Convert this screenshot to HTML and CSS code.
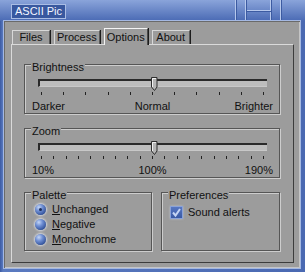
FILE: index.html
```html
<!DOCTYPE html>
<html lang="en">
<head>
    <meta charset="UTF-8">
    <title>ASCII Pic</title>
    <link rel="stylesheet" href="styles.css">
</head>
<body>
    <div class="window">
        <div class="titlebar">
            <span class="title">ASCII Pic</span>
            <svg class="deco" width="50" height="21" viewBox="0 0 50 21">
                <path d="M2.5 0V21M12.5 0V21M37.5 0V21M47.5 0V21M12 10.5H38" stroke="#b6c8ec" stroke-width="1" fill="none"/>
                <path d="M3.5 0V21M13.5 0V21M38.5 0V21M48.5 0V21M13 11.5H38" stroke="#3c5ba2" stroke-width="1" fill="none"/>
            </svg>
        </div>
        <div class="frame">
            <div class="client">
                <div class="tabs">
                    <span class="tab">Files</span>
                    <span class="tab">Process</span>
                    <span class="tab active">Options</span>
                    <span class="tab">About</span>
                </div>
                <div class="panel">
                    <div class="group slider-group">
                        <span class="legend">Brightness</span>
                        <div class="track"><svg class="thumb" width="7" height="14" viewBox="0 0 7 14"><polygon points="0.5,0.5 6,0.5 6,10 3.5,13.5 0.5,10" fill="#b4b4b4" stroke="#2e2e2e"/><path d="M1.5 10V1.5H5" stroke="#f2f2f2" fill="none"/></svg></div>
                        <div class="ticks">
                            <i></i><i></i><i></i><i></i><i></i><i></i><i></i><i></i><i></i><i></i><i></i>
                        </div>
                        <div class="scale"><span>Darker</span><span>Normal</span><span>Brighter</span></div>
                    </div>
                    <div class="group slider-group">
                        <span class="legend">Zoom</span>
                        <div class="track"><svg class="thumb" width="7" height="14" viewBox="0 0 7 14"><polygon points="0.5,0.5 6,0.5 6,10 3.5,13.5 0.5,10" fill="#b4b4b4" stroke="#2e2e2e"/><path d="M1.5 10V1.5H5" stroke="#f2f2f2" fill="none"/></svg></div>
                        <div class="ticks">
                            <i></i><i></i><i></i><i></i><i></i><i></i><i></i><i></i><i></i><i></i>
                            <i></i><i></i><i></i><i></i><i></i><i></i><i></i><i></i><i></i>
                        </div>
                        <div class="scale"><span>10%</span><span>100%</span><span>190%</span></div>
                    </div>
                    <div class="row">
                        <div class="group palette">
                            <span class="legend">Palette</span>
                            <label class="option"><span class="radio checked"></span><span><u>U</u>nchanged</span></label>
                            <label class="option"><span class="radio"></span><span><u>N</u>egative</span></label>
                            <label class="option"><span class="radio"></span><span><u>M</u>onochrome</span></label>
                        </div>
                        <div class="group prefs">
                            <span class="legend">Preferences</span>
                            <label class="option">
                                <span class="check"><svg width="11" height="11" viewBox="0 0 11 11"><path d="M2 5.5L4.5 8.5L9 2" stroke="#c4d4f4" stroke-width="2" fill="none"/></svg></span>
                                <span>Sound alerts</span>
                            </label>
                        </div>
                    </div>
                </div>
            </div>
        </div>
    </div>
</body>
</html>
```

FILE: styles.css
```css
* {
    box-sizing: border-box;
}
body {
    margin: 0;
    font-family: "Liberation Sans", Arial, sans-serif;
    font-size: 11px;
    color: #111;
    background: #4a69b2;
}
.window {
    width: 305px;
    height: 272px;
    display: flex;
    flex-direction: column;
}
.titlebar {
    height: 21px;
    flex: none;
    display: flex;
    align-items: flex-start;
    background: linear-gradient(#8aa4da, #4a6ab4);
}
.title {
    margin: 4px 0 0 11px;
    height: 15px;
    padding: 0 3px;
    line-height: 13px;
    white-space: nowrap;
    color: #f2f6ff;
    background: #38589f;
    border: 1px solid #a9bde4;
}
.deco {
    margin-left: auto;
    margin-right: 22px;
}
.frame {
    flex: 1;
    display: flex;
    min-height: 0;
    padding: 0 5px 4px 4px;
    background: linear-gradient(to right, #3b5aa3, #5a7ac0 3px, #4a69b2);
}
.client {
    flex: 1;
    display: flex;
    flex-direction: column;
    padding: 7px 6px 5px 7px;
    background: #9c9c9c;
    box-shadow: 0 0 0 1px #a4b8e2, inset 1px 1px 0 #6a6a6a, inset -1px -1px 0 #c4c4c4;
}
.tabs {
    display: flex;
    align-items: flex-end;
    gap: 4px;
    height: 16px;
    flex: none;
    padding-left: 1px;
}
.tab {
    min-width: 38px;
    padding: 0 2px;
    height: 14px;
    line-height: 13px;
    text-align: center;
    border-top: 1px solid #d8d8d8;
    border-left: 1px solid #d8d8d8;
    border-right: 1px solid #5a5a5a;
    box-shadow: 1px 0 0 #1c1c1c;
}
.tab.active {
    position: relative;
    z-index: 1;
    height: 17px;
    padding-top: 1px;
    margin-bottom: -1px;
    line-height: 15px;
    background: #9c9c9c;
    border-color: #f4f4f4;
    border-right-color: #4a4a4a;
}
.panel {
    flex: 1;
    display: flex;
    flex-direction: column;
    gap: 14px;
    padding: 19px 13px 10px 12px;
    border: 1px solid;
    border-color: #dadada #3c3c3c #3c3c3c #dadada;
}
.group {
    position: relative;
    border: 1px solid #565656;
    box-shadow: 1px 1px 0 #cdcdcd, inset 1px 1px 0 #cdcdcd;
}
.legend {
    position: absolute;
    top: -4px;
    left: 6px;
    padding: 0 1px;
    line-height: 12px;
    background: #9c9c9c;
}
.slider-group {
    height: 50px;
    flex: none;
    padding: 14px 12px 0 13px;
}
.track {
    position: relative;
    height: 8px;
    border-top: 2px solid #2a2a2a;
    border-left: 2px solid #2a2a2a;
    border-bottom: 1px solid #c8c8c8;
    background: #bdbdbd;
}
.thumb {
    position: absolute;
    top: -4px;
    left: calc(50% - 3px);
}
.ticks {
    display: flex;
    justify-content: space-between;
    margin: 5px 3px 0 3px;
}
.ticks i {
    width: 1px;
    height: 3px;
    background: #222;
}
.scale {
    display: grid;
    grid-template-columns: 1fr auto 1fr;
    margin: 5px -6px 0 -6px;
    line-height: 13px;
}
.scale span:last-child {
    justify-self: end;
}
.row {
    display: flex;
    gap: 9px;
}
.palette {
    width: 128px;
    height: 59px;
    padding: 9px 0 0 10px;
}
.prefs {
    flex: 1;
    height: 59px;
    padding: 12px 0 0 9px;
}
.option {
    display: flex;
    align-items: center;
    gap: 6px;
    height: 15px;
    line-height: 15px;
}
.radio {
    width: 11px;
    height: 11px;
    border-radius: 50%;
    background: radial-gradient(circle at 35% 30%, #c4d6f6 0, #6f8fd4 35%, #34549c 75%, #22396e 100%);
    box-shadow: 0 0 2px 1px rgba(235, 242, 255, 0.7);
    display: flex;
    align-items: center;
    justify-content: center;
}
.radio.checked::after {
    content: "";
    width: 3px;
    height: 3px;
    border-radius: 50%;
    background: #1c2c58;
}
.check {
    width: 11px;
    height: 11px;
    background: linear-gradient(#5676c2, #3a5aa4);
    box-shadow: 0 0 0 1px #8aa2d8, 0 0 2px 1px rgba(220, 230, 250, 0.5);
}
.check svg {
    display: block;
}
```
